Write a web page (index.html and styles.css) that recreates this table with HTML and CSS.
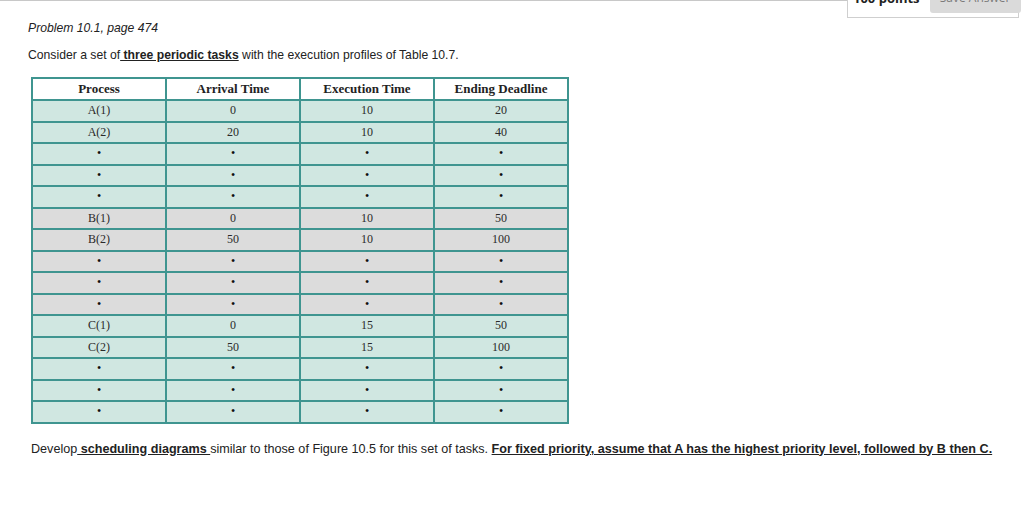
FILE: index.html
```html
<!DOCTYPE html>
<html>
<head>
<meta charset="utf-8">
<link rel="stylesheet" href="styles.css">
</head>
<body>
<div class="topline"></div>
<div class="pointsbox"><span class="pts">100 points</span><span class="save">Save Answer</span></div>
<main class="content">
  <p class="problem">Problem 10.1, page 474</p>
  <p class="intro">Consider a set of<b class="u"> three periodic tasks</b> with the execution profiles of Table 10.7.</p>
  <table class="tasks">
    <thead>
      <tr><th>Process</th><th>Arrival Time</th><th>Execution Time</th><th>Ending Deadline</th></tr>
    </thead>
    <tbody>
      <tr class="a"><td>A(1)</td><td>0</td><td>10</td><td>20</td></tr>
      <tr class="a"><td>A(2)</td><td>20</td><td>10</td><td>40</td></tr>
      <tr class="a dot"><td>•</td><td>•</td><td>•</td><td>•</td></tr>
      <tr class="a dot"><td>•</td><td>•</td><td>•</td><td>•</td></tr>
      <tr class="a dot"><td>•</td><td>•</td><td>•</td><td>•</td></tr>
      <tr class="b"><td>B(1)</td><td>0</td><td>10</td><td>50</td></tr>
      <tr class="b"><td>B(2)</td><td>50</td><td>10</td><td>100</td></tr>
      <tr class="b dot"><td>•</td><td>•</td><td>•</td><td>•</td></tr>
      <tr class="b dot"><td>•</td><td>•</td><td>•</td><td>•</td></tr>
      <tr class="b dot"><td>•</td><td>•</td><td>•</td><td>•</td></tr>
      <tr class="a"><td>C(1)</td><td>0</td><td>15</td><td>50</td></tr>
      <tr class="a"><td>C(2)</td><td>50</td><td>15</td><td>100</td></tr>
      <tr class="a dot"><td>•</td><td>•</td><td>•</td><td>•</td></tr>
      <tr class="a dot"><td>•</td><td>•</td><td>•</td><td>•</td></tr>
      <tr class="a dot"><td>•</td><td>•</td><td>•</td><td>•</td></tr>
    </tbody>
  </table>
  <p class="develop">Develop<b class="u"> scheduling diagrams </b>similar to those of Figure 10.5 for this set of tasks. <b class="u">For fixed priority, assume that A has the highest priority level, followed by B then C.</b></p>
</main>
</body>
</html>
```
FILE: styles.css
```css
html, body {
  margin: 0;
  padding: 0;
  background: #fff;
  font-family: "Liberation Sans", Arial, sans-serif;
  color: #222;
  width: 1024px;
  height: 521px;
  overflow: hidden;
  position: relative;
}
.topline {
  height: 1px;
  background: #c8c8c8;
  width: 848px;
}
.pointsbox {
  position: absolute;
  top: -14px;
  left: 847px;
  width: 162px;
  height: 31px;
  border: 1px solid #cfcfcf;
  border-top: none;
  background: #fff;
  display: flex;
  align-items: flex-start;
  padding: 0 4px 0 4px;
  gap: 10px;
  font-family: "Open Sans", sans-serif;
  font-size: 13px;
  line-height: 18px;
  white-space: nowrap;
}
.pts {
  font-weight: bold;
  color: #222;
  padding: 3px 0 0 1px;
  flex-shrink: 0;
}
.save {
  flex-shrink: 0;
  background: #dadada;
  color: #7a7a7a;
  width: 91px;
  height: 24px;
  padding-top: 3px;
  border-radius: 3px;
  font-size: 12px;
  text-align: center;
}
.content {
  padding: 20px 0 0 28px;
}
.problem {
  margin: 0;
  font-style: italic;
  font-size: 12.2px;
  color: #222;
}
.intro {
  margin: 13px 0 0 0;
  font-size: 12.2px;
}
.u {
  text-decoration: underline;
  font-weight: bold;
}
.tasks {
  margin: 15px 0 0 3px;
  border-collapse: collapse;
  font-family: "Liberation Serif", "Times New Roman", serif;
  font-size: 12px;
  color: #2a2a2a;
  border: 2px solid #3f9590;
}
.tasks th, .tasks td {
  border: 2px solid #3f9590;
  width: 132px;
  text-align: center;
  padding: 0;
  height: 19.5px;
}
.tasks th {
  background: #fff;
  font-weight: bold;
  font-size: 13px;
  height: 20px;
  color: #222;
}
.tasks tr.a td { background: #d0e7e1; }
.tasks tr.b td { background: #dcdcdc; }
.tasks tr.dot td { font-size: 12px; color: #111; }
.develop {
  margin: 18px 0 0 3px;
  font-size: 12.6px;
}
```
